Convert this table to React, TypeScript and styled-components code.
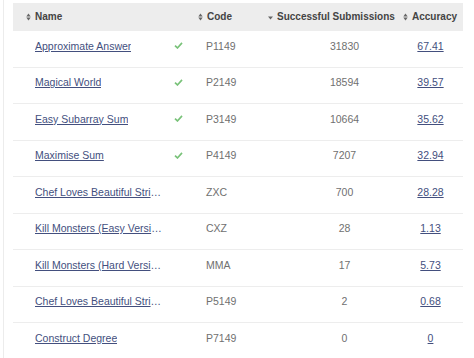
import styled, { createGlobalStyle } from 'styled-components';

interface IProblem {
  name: string;
  code: string;
  submissions: number;
  accuracy: string;
  solved: boolean;
}

const PROBLEMS: IProblem[] = [
  { name: 'Approximate Answer', code: 'P1149', submissions: 31830, accuracy: '67.41', solved: true },
  { name: 'Magical World', code: 'P2149', submissions: 18594, accuracy: '39.57', solved: true },
  { name: 'Easy Subarray Sum', code: 'P3149', submissions: 10664, accuracy: '35.62', solved: true },
  { name: 'Maximise Sum', code: 'P4149', submissions: 7207, accuracy: '32.94', solved: true },
  { name: 'Chef Loves Beautiful Strings', code: 'ZXC', submissions: 700, accuracy: '28.28', solved: false },
  { name: 'Kill Monsters (Easy Version)', code: 'CXZ', submissions: 28, accuracy: '1.13', solved: false },
  { name: 'Kill Monsters (Hard Version)', code: 'MMA', submissions: 17, accuracy: '5.73', solved: false },
  { name: 'Chef Loves Beautiful Strings', code: 'P5149', submissions: 2, accuracy: '0.68', solved: false },
  { name: 'Construct Degree', code: 'P7149', submissions: 0, accuracy: '0', solved: false },
];

const GlobalStyle = createGlobalStyle`
  body {
    margin: 0;
    background: #fff;
    font-family: 'Liberation Sans', Arial, sans-serif;
  }
`;

const SortIcon = ({ active }: { active?: boolean }) =>
  active ? (
    <svg width="5" height="8" viewBox="0 0 5 8">
      <path d="M0 3.5 L5 3.5 L2.5 6.5 Z" fill="#666" />
    </svg>
  ) : (
    <svg width="5" height="8" viewBox="0 0 5 8">
      <path d="M0.3 3.4 L4.7 3.4 L2.5 0.4 Z" fill="#666" />
      <path d="M0.3 4.6 L4.7 4.6 L2.5 7.6 Z" fill="#666" />
    </svg>
  );

const CheckIcon = () => (
  <svg width="9" height="7" viewBox="0 0 10 8">
    <path d="M1 4.2 L3.8 6.8 L9 1" fill="none" stroke="#79c279" strokeWidth="1.9" />
  </svg>
);

const App = () => {
  return (
    <>
      <GlobalStyle />
      <Card>
        <Table>
          <HeaderRow>
            <HeadCell $pad={13}>
              <SortIcon />
              Name
            </HeadCell>
            <HeadCell $pad={5}>
              <SortIcon />
              Code
            </HeadCell>
            <HeadCell $pad={5}>
              <SortIcon active />
              Successful Submissions
            </HeadCell>
            <HeadCell $pad={5}>
              <SortIcon />
              Accuracy
            </HeadCell>
          </HeaderRow>
          {PROBLEMS.map((p, i) => (
            <Row key={i}>
              <NameCell>
                <ProblemLink href="#">{p.name}</ProblemLink>
                {p.solved && <CheckIcon />}
              </NameCell>
              <CodeCell>{p.code}</CodeCell>
              <SubmissionsCell>{p.submissions}</SubmissionsCell>
              <AccuracyCell>
                <AccuracyLink href="#">{p.accuracy}</AccuracyLink>
              </AccuracyCell>
            </Row>
          ))}
        </Table>
      </Card>
    </>
  );
};

const Card = styled.div`
  margin-left: 3px;
  padding: 3px 12px 0 9px;
  border-left: 1px solid #ececec;
  height: 355px;
  overflow: hidden;
`;

const Table = styled.div`
  width: 450px;
  display: flex;
  flex-direction: column;
`;

const Columns = styled.div`
  display: grid;
  grid-template-columns: 180px 70px 135px 65px;
  align-items: center;
`;

const HeaderRow = styled(Columns)`
  height: 27px;
  background: #ededed;
`;

const HeadCell = styled.div<{ $pad: number }>`
  display: flex;
  align-items: center;
  gap: 4px;
  padding-left: ${({ $pad }) => $pad}px;
  font-size: 10px;
  font-weight: 700;
  color: #444;
  white-space: nowrap;
`;

const Row = styled(Columns)`
  height: 36.5px;
  box-sizing: border-box;
  border-top: 1px solid #ededed;
  padding-bottom: 6px;
  font-size: 10.5px;
  color: #707070;

  &:first-of-type {
    border-top: none;
  }
`;

const NameCell = styled.div`
  display: flex;
  align-items: center;
  justify-content: space-between;
  padding: 0 10px 0 22px;
  min-width: 0;
`;

const ProblemLink = styled.a`
  max-width: 129px;
  overflow: hidden;
  text-overflow: ellipsis;
  white-space: nowrap;
  color: #434f7e;
  text-decoration: underline;
`;

const CodeCell = styled.div`
  padding-left: 13px;
`;

const SubmissionsCell = styled.div`
  padding-left: 28px;
  text-align: center;
`;

const AccuracyCell = styled.div`
  text-align: center;
`;

const AccuracyLink = styled.a`
  color: #434f7e;
  text-decoration: underline;
`;

export default App;
